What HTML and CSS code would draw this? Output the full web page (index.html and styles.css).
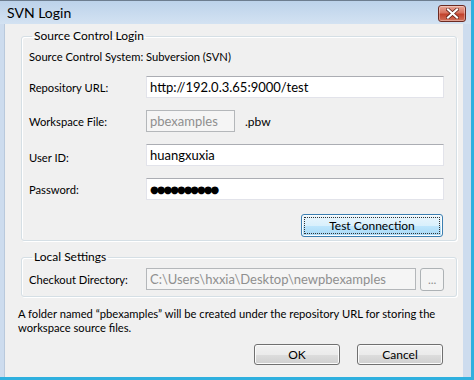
FILE: index.html
```html
<!DOCTYPE html>
<html lang="en">
<head>
    <meta charset="UTF-8">
    <meta name="viewport" content="width=device-width, initial-scale=1.0">
    <title>SVN Login</title>
    <link rel="stylesheet" href="styles.css">
</head>
<body>

    <div class="window">
        <!-- Title bar -->
        <div class="titlebar">
            <span class="title">SVN Login</span>
            <button class="close-btn" title="Close">
                <svg width="13" height="11" viewBox="0 0 13 11">
                    <path d="M2 1.5 L11 9.5 M11 1.5 L2 9.5" stroke="#5a1a12" stroke-width="3.6" stroke-linecap="square"/>
                    <path d="M2 1.5 L11 9.5 M11 1.5 L2 9.5" stroke="#ffffff" stroke-width="2.2" stroke-linecap="square"/>
                </svg>
            </button>
        </div>

        <div class="client">
            <!-- Source Control Login -->
            <fieldset class="group group-login">
                <legend>Source Control Login</legend>
                <div class="form">
                    <span class="label">Source Control System:</span>
                    <span class="value">Subversion (SVN)</span>

                    <label class="label">Repository URL:</label>
                    <input type="text" class="field" value="http://192.0.3.65:9000/test">

                    <label class="label">Workspace File:</label>
                    <div class="with-ext">
                        <input type="text" class="field field-short" value="pbexamples" disabled>
                        <span class="ext">.pbw</span>
                    </div>

                    <label class="label label-low">User ID:</label>
                    <input type="text" class="field" value="huangxuxia">

                    <label class="label">Password:</label>
                    <input type="text" class="field field-password" value="●●●●●●●●●●">
                </div>
                <div class="buttons buttons-test">
                    <button class="btn btn-default">Test Connection</button>
                </div>
            </fieldset>

            <!-- Local Settings -->
            <fieldset class="group group-local">
                <legend>Local Settings</legend>
                <div class="form">
                    <label class="label">Checkout Directory:</label>
                    <div class="with-browse">
                        <input type="text" class="field" value="C:\Users\hxxia\Desktop\newpbexamples" disabled>
                        <button class="btn btn-browse" disabled>...</button>
                    </div>
                </div>
            </fieldset>

            <p class="note">A folder named “pbexamples” will be created under the repository URL for storing the workspace source files.</p>

            <div class="buttons buttons-dialog">
                <button class="btn btn-dialog">OK</button>
                <button class="btn btn-dialog">Cancel</button>
            </div>
        </div>
    </div>

</body>
</html>
```

FILE: styles.css
```css
* {
    box-sizing: border-box;
}
body {
    margin: 0;
    font-family: Lato, "Noto Sans", sans-serif;
    font-size: 11.2px;
    color: #000;
    background: #ffffff;
}
.window {
    width: 474px;
    height: 380px;
    display: flex;
    flex-direction: column;
    background: #cddcee;
    border-right: 3px solid #2fb0df;
    border-bottom: 3px solid #2fb0df;
}

/* title bar */
.titlebar {
    height: 24px;
    display: flex;
    align-items: center;
    justify-content: space-between;
    padding: 0 5px 0 7px;
    background: linear-gradient(#bcd2ea, #cadcef 60%, #d3e2f2);
    border-top: 1px solid #6d7d8f;
}
.title {
    font-size: 14px;
    color: #000;
}
.close-btn {
    width: 28px;
    height: 17px;
    margin-top: 1px;
    padding: 0;
    display: flex;
    align-items: center;
    justify-content: center;
    border: 1px solid #6b2a22;
    border-radius: 3px;
    background: linear-gradient(#e8a798, #d8735f 45%, #c2422c 55%, #d2715a);
    box-shadow: inset 0 0 0 1px rgba(255, 255, 255, 0.35);
}

/* client area */
.client {
    flex: 1;
    margin: 0 8px 0 4px;
    background: #f0f0f0;
    padding: 1px 6px 0 16px;
    border-left: 1px solid #b9c9dc;
}
.group {
    margin: 0;
    padding: 6px 12px 3px 7px;
    border: 1px solid #d5dfe5;
    border-radius: 3px;
    box-shadow: inset 1px 1px 0 #ffffff, 1px 1px 0 #ffffff;
}
.group legend {
    padding: 0 2px;
    margin-left: 3px;
    line-height: 14px;
    font-size: 12px;
}
.group-login {
    margin-top: 4px;
}
.group-local {
    margin-top: 9px;
    padding-top: 4px;
    padding-bottom: 5px;
}
.form {
    display: grid;
    grid-template-columns: 117px 1fr;
    row-gap: 12px;
    align-items: center;
}
.label {
    line-height: 15px;
    white-space: nowrap;
}
.label-low {
    padding-top: 5px;
}
.value {
    line-height: 15px;
}
.field {
    width: 100%;
    height: 22px;
    padding: 0 3px;
    font-family: inherit;
    font-size: 13px;
    color: #000;
    background: #fff;
    border: 1px solid #e2e3ea;
    border-top-color: #abadb3;
    outline: none;
}
.field:disabled {
    color: #8f8f8f;
    background: #f5f5f5;
    border: 1px solid #b4b7ba;
}
.field-password {
    font-family: "DejaVu Sans", sans-serif;
    font-size: 10px;
    letter-spacing: -2px;
}
.with-ext {
    display: flex;
    align-items: center;
    gap: 10px;
}
.field-short {
    width: 89px;
}
.ext {
    font-size: 12px;
}
.with-browse {
    display: flex;
    gap: 4px;
}

/* buttons */
.buttons {
    display: flex;
    justify-content: flex-end;
}
.buttons-test {
    margin-top: 14px;
    padding-right: 1px;
}
.btn {
    font-family: inherit;
    font-size: 12px;
    color: #000;
    padding: 0;
    border: 1px solid #707070;
    border-radius: 3px;
    background: linear-gradient(#f2f2f2, #ebebeb 50%, #dddddd 51%, #cfcfcf);
    box-shadow: inset 0 0 0 1px #fbfbfb;
}
.btn-default {
    width: 142px;
    height: 23px;
    border-color: #3c7fb1;
    background: linear-gradient(#eaf6fd, #d9f0fc 50%, #bee6fd 51%, #a7d9f5);
    outline: 1px dotted #333;
    outline-offset: -4px;
}
.btn-browse {
    width: 26px;
    height: 23px;
    color: #8f8f8f;
    border-color: #adb2b5;
    background: #f4f4f4;
    box-shadow: none;
}
.note {
    margin: 10px 0 0 -3px;
    line-height: 14px;
    width: 440px;
}
.buttons-dialog {
    margin-top: 9px;
    margin-right: 14px;
    gap: 17px;
}
.btn-dialog {
    width: 86px;
    height: 21px;
}
```
